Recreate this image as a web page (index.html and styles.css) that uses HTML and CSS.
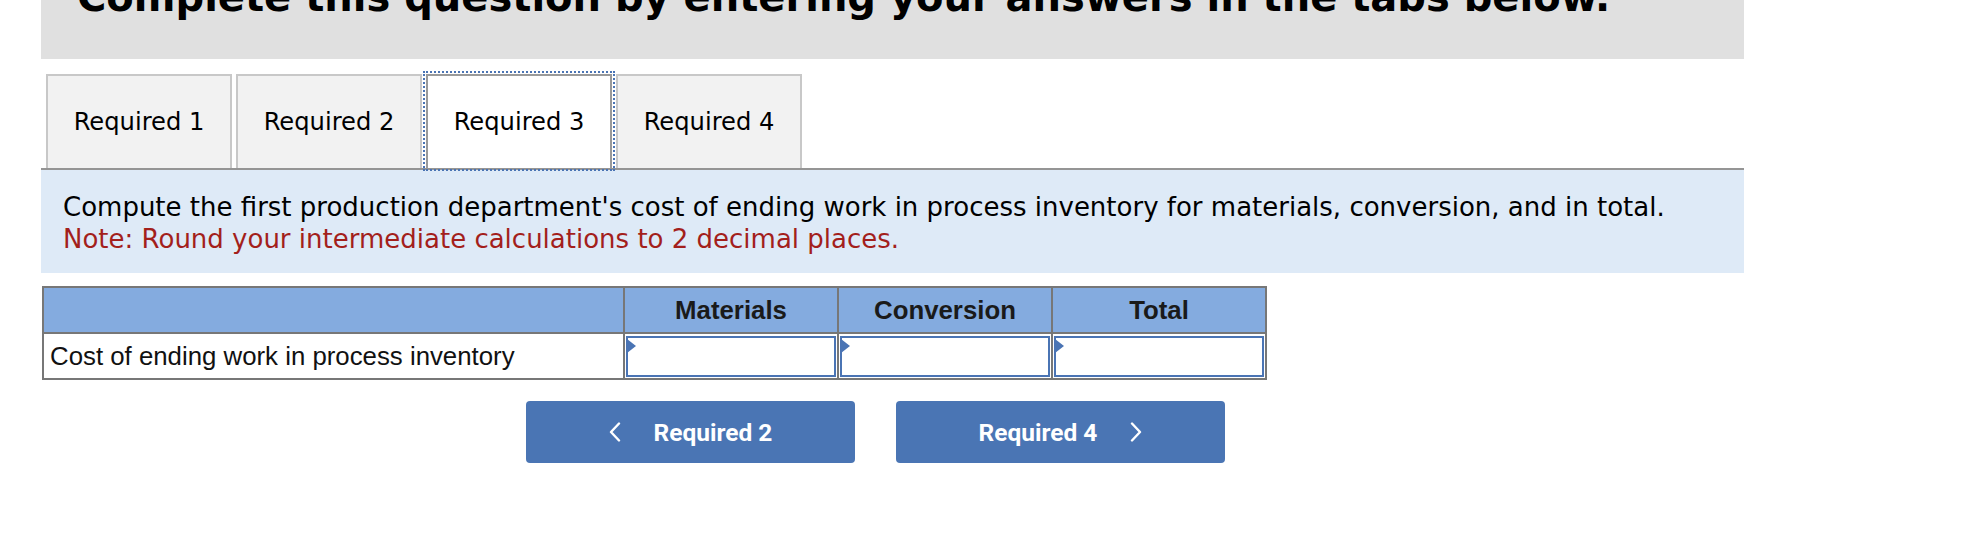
FILE: index.html
```html
<!DOCTYPE html>
<html lang="en">
<head>
<meta charset="utf-8">
<title>Required 3</title>
<link rel="stylesheet" href="styles.css">
</head>
<body>
<div class="page">
  <div class="banner">
    <h2 class="banner-title">Complete this question by entering your answers in the tabs below.</h2>
  </div>

  <div class="tabs">
    <button class="tab">Required 1</button>
    <button class="tab">Required 2</button>
    <button class="tab tab-active">Required 3</button>
    <button class="tab">Required 4</button>
  </div>

  <div class="prompt">
    <p class="prompt-text">Compute the first production department's cost of ending work in process inventory for materials, conversion, and in total.</p>
    <p class="prompt-note">Note: Round your intermediate calculations to 2 decimal places.</p>
  </div>

  <table class="grid">
    <colgroup>
      <col class="col-label">
      <col class="col-num">
      <col class="col-num">
      <col class="col-num">
    </colgroup>
    <thead>
      <tr>
        <th></th>
        <th>Materials</th>
        <th>Conversion</th>
        <th>Total</th>
      </tr>
    </thead>
    <tbody>
      <tr>
        <td class="label">Cost of ending work in process inventory</td>
        <td class="entry"><div class="field"></div></td>
        <td class="entry"><div class="field"></div></td>
        <td class="entry"><div class="field"></div></td>
      </tr>
    </tbody>
  </table>

  <div class="nav">
    <button class="nav-btn">
      <svg class="chev" width="12" height="20" viewBox="0 0 12 20"><polyline points="10,1.5 2,10 10,18.5" fill="none" stroke="#fff" stroke-width="2.4" stroke-linecap="round" stroke-linejoin="round"/></svg>
      <span>Required 2</span>
    </button>
    <button class="nav-btn">
      <span>Required 4</span>
      <svg class="chev" width="12" height="20" viewBox="0 0 12 20"><polyline points="2,1.5 10,10 2,18.5" fill="none" stroke="#fff" stroke-width="2.4" stroke-linecap="round" stroke-linejoin="round"/></svg>
    </button>
  </div>
</div>
</body>
</html>
```

FILE: styles.css
```css
* { box-sizing: border-box; }

html, body {
  margin: 0;
  padding: 0;
  background: #ffffff;
}

.page {
  margin-left: 41px;
  width: 1703px;
}

.banner {
  height: 59px;
  background: #e0e0e0;
  overflow: hidden;
  padding-left: 36px;
}

.banner-title {
  margin: -25px 0 0 0;
  font-family: "DejaVu Sans", Verdana, sans-serif;
  font-weight: bold;
  font-size: 40px;
  line-height: 44px;
  color: #000;
  white-space: nowrap;
}

.tabs {
  margin-top: 15px;
  padding-left: 5px;
  display: flex;
  gap: 4px;
  border-bottom: 2px solid #959595;
}

.tab {
  width: 186px;
  height: 94px;
  margin: 0;
  padding: 0;
  border: 2px solid #c8c8c8;
  border-bottom: none;
  background: #f2f2f2;
  font-family: "DejaVu Sans", Verdana, sans-serif;
  font-size: 24.2px;
  color: #000;
  cursor: pointer;
}

.tab-active {
  background: #ffffff;
  border-color: #9a9a9a;
  outline: 2px dotted #4a74b4;
  outline-offset: 1px;
  position: relative;
  z-index: 1;
}

.prompt {
  background: #deeaf7;
  padding: 21px 22px 18px;
  font-family: "DejaVu Sans", Verdana, sans-serif;
  font-size: 26px;
  line-height: 32px;
}

.prompt-text,
.prompt-note {
  margin: 0;
  color: #000;
  white-space: nowrap;
}

.prompt-note {
  color: #a31f1c;
}

.grid {
  margin-top: 13px;
  margin-left: 1px;
  width: 1225px;
  border-collapse: collapse;
  table-layout: fixed;
  border: 2px solid #777777;
  font-family: "Liberation Sans", Arial, sans-serif;
  font-size: 25.8px;
}

.col-label { width: 581px; }
.col-num { width: 214px; }

.grid th {
  height: 46px;
  background: #84abdf;
  border: 2px solid #777777;
  font-weight: bold;
  color: #1a1a1a;
  text-align: center;
  padding: 0;
}

.grid td {
  height: 46px;
  border: 2px solid #777777;
  padding: 0;
}

.grid td.label {
  padding-left: 6px;
  color: #111;
  white-space: nowrap;
}

.grid td.entry {
  padding: 1px;
}

.field {
  position: relative;
  height: 41px;
  border: 2px solid #4a74b4;
  background: #fff;
}

.field::before {
  content: "";
  position: absolute;
  left: -1px;
  top: 1px;
  border-left: 9px solid #4a74b4;
  border-top: 7px solid transparent;
  border-bottom: 7px solid transparent;
}

.nav {
  margin-top: 21px;
  padding-left: 485px;
  display: flex;
  gap: 41px;
}

.nav-btn {
  width: 329px;
  height: 62px;
  margin: 0;
  border: none;
  border-radius: 4px;
  background: #4a75b4;
  color: #ffffff;
  font-family: Roboto, "Liberation Sans", sans-serif;
  font-weight: bold;
  font-size: 24.5px;
  display: flex;
  align-items: center;
  justify-content: center;
  gap: 33px;
  cursor: pointer;
}

.chev {
  display: block;
}
```
